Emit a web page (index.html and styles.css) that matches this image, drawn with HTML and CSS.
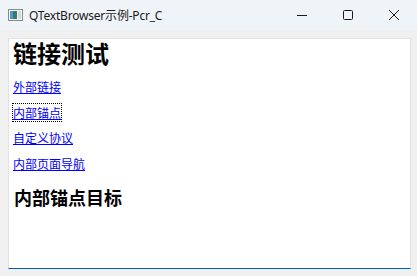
FILE: index.html
```html
<!DOCTYPE html>
<html lang="zh-CN">
<head>
    <meta charset="UTF-8">
    <title>QTextBrowser示例-Pcr_C</title>
    <link rel="stylesheet" href="styles.css">
</head>
<body>
    <div class="window">
        <!-- Title bar -->
        <div class="titlebar">
            <span class="app-icon">
                <svg width="15" height="12" viewBox="0 0 15 12">
                    <rect x="0.5" y="0.5" width="14" height="11" fill="#f4f4f4" stroke="#8a8a8a"/>
                    <rect x="2" y="2" width="7" height="8" fill="#3a7a6a"/>
                    <rect x="2" y="2" width="3" height="8" fill="#4a9ad0"/>
                    <rect x="10" y="2" width="3" height="8" fill="#d8d8d8"/>
                </svg>
            </span>
            <span class="title">QTextBrowser示例-Pcr_C</span>
            <div class="controls">
                <span class="ctrl">
                    <svg width="10" height="10" viewBox="0 0 10 10"><path d="M0 5.5h10" stroke="#1a1a1a" stroke-width="1"/></svg>
                </span>
                <span class="ctrl">
                    <svg width="10" height="10" viewBox="0 0 10 10"><rect x="0.5" y="0.5" width="9" height="9" rx="1" fill="none" stroke="#1a1a1a"/></svg>
                </span>
                <span class="ctrl">
                    <svg width="10" height="10" viewBox="0 0 10 10"><path d="M0 0L10 10M10 0L0 10" stroke="#1a1a1a" stroke-width="1"/></svg>
                </span>
            </div>
        </div>

        <!-- Client area -->
        <div class="client">
            <div class="browser">
                <h1>链接测试</h1>
                <p><a href="#">外部链接</a></p>
                <p><a href="#target" class="focused">内部锚点</a></p>
                <p><a href="#">自定义协议</a></p>
                <p><a href="#">内部页面导航</a></p>
                <h2 id="target">内部锚点目标</h2>
            </div>
        </div>
    </div>
</body>
</html>
```

FILE: styles.css
```css
body {
    margin: 0;
    font-family: "Noto Sans", "Noto Sans CJK SC", sans-serif;
    background-color: #f0f0f0;
}

.window {
    width: 417px;
    height: 276px;
    overflow: hidden;
}

/* Title bar */
.titlebar {
    height: 30px;
    background: #eff4f9;
    display: flex;
    align-items: center;
}

.app-icon {
    display: flex;
    margin-left: 8px;
    margin-right: 6px;
}

.title {
    font-family: "Noto Sans", "Noto Sans CJK SC", sans-serif;
    font-size: 12px;
    color: #1a1a1a;
    letter-spacing: -0.2px;
}

.controls {
    margin-left: auto;
    display: flex;
    height: 30px;
}

.ctrl {
    width: 46px;
    display: flex;
    align-items: center;
    justify-content: center;
}

/* Client area */
.client {
    height: 246px;
    padding: 8px 6px 0 8px;
    box-sizing: border-box;
}

.browser {
    height: 231px;
    background: #fff;
    border: 1px solid #e3e3e3;
    border-bottom: 1px solid #005fb8;
    box-sizing: border-box;
    padding: 0 4px;
    font-family: "Noto Sans CJK SC", sans-serif;
}

h1 {
    font-size: 24px;
    font-weight: bold;
    margin: 0 0 7px 0;
    line-height: 28px;
    color: #000;
}

p {
    margin: 0;
    font-size: 12px;
    line-height: 25.5px;
}

a {
    color: #0000ff;
    text-decoration: underline;
}

a.focused {
    outline: 1px dotted #000;
}

h2 {
    font-size: 18px;
    font-weight: bold;
    margin: 8px 0 0 1px;
    line-height: 26px;
    color: #000;
}
```
